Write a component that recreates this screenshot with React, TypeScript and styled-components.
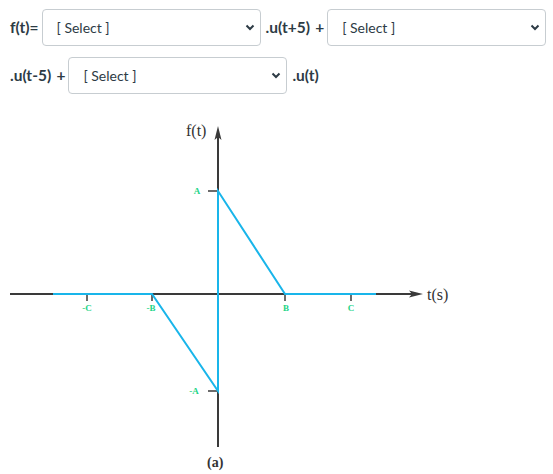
import React from "react";
import styled, { createGlobalStyle } from "styled-components";

const Global = createGlobalStyle`
  html, body { margin: 0; padding: 0; background: #fff; }
  body { font-family: Lato, "Open Sans", sans-serif; color: #2d3b45; }
`;

const Page = styled.div`
  padding: 8px 0 0 10px;
  width: 553px;
  box-sizing: border-box;
`;

const Row = styled.div`
  display: flex;
  align-items: center;
  height: 38px;
  margin-bottom: 10px;
`;

const Label = styled.span`
  font-weight: 700;
  font-size: 15.5px;
  word-spacing: 1.5px;
  color: #2d3b45;
  white-space: nowrap;
`;

const SelectWrap = styled.div`
  position: relative;
  margin: 0 5px 0 3px;
  width: 219px;
  height: 37px;
  flex: none;
`;

const Select = styled.select`
  appearance: none;
  -webkit-appearance: none;
  width: 100%;
  height: 100%;
  box-sizing: border-box;
  border: 1px solid #c7cdd1;
  border-radius: 4px;
  background: #fff;
  padding: 0 30px 0 14px;
  font-family: Lato, sans-serif;
  font-size: 14px;
  color: #2d3b45;
  outline: none;
`;

const Chevron = styled.svg`
  position: absolute;
  right: 6px;
  top: 15px;
  width: 10px;
  height: 7px;
  pointer-events: none;
`;

const Graph = styled.svg`
  display: block;
`;

function Dropdown() {
  return (
    <SelectWrap>
      <Select defaultValue="">
        <option value="">[ Select ]</option>
      </Select>
      <Chevron viewBox="0 0 10 7">
        <path d="M1.5 1.5 L5 5 L8.5 1.5" fill="none" stroke="#2d3b45" strokeWidth="2" />
      </Chevron>
    </SelectWrap>
  );
}

const AXIS = "#3a3a3a";
const BLUE = "#19b5ea";
const GREEN = "#22d486";

export default function App() {
  return (
    <>
      <Global />
      <Page>
        <Row>
          <Label>f(t)=</Label>
          <Dropdown />
          <Label>.u(t+5) +</Label>
          <Dropdown />
        </Row>
        <Row>
          <Label>.u(t-5) +</Label>
          <Dropdown />
          <Label>.u(t)</Label>
        </Row>
      </Page>
      <Graph width="553" height="370" viewBox="0 104 553 370">
        {/* axes */}
        <line x1="10" y1="294" x2="414" y2="294" stroke={AXIS} strokeWidth="2" />
        <path d="M423 294 L409 290.5 L412 294 L409 297.5 Z" fill={AXIS} />
        <line x1="218" y1="447" x2="218" y2="135" stroke={AXIS} strokeWidth="2" />
        <path d="M218 126 L214.5 140 L218 137 L221.5 140 Z" fill={AXIS} />
        {/* ticks */}
        <line x1="87" y1="294" x2="87" y2="301" stroke={AXIS} strokeWidth="1.5" />
        <line x1="152" y1="294" x2="152" y2="301" stroke={AXIS} strokeWidth="1.5" />
        <line x1="285" y1="294" x2="285" y2="301" stroke={AXIS} strokeWidth="1.5" />
        <line x1="351" y1="294" x2="351" y2="301" stroke={AXIS} strokeWidth="1.5" />
        <line x1="208" y1="191" x2="218" y2="191" stroke={AXIS} strokeWidth="1.5" />
        <line x1="208" y1="391" x2="218" y2="391" stroke={AXIS} strokeWidth="1.5" />
        {/* signal */}
        <polyline
          points="53,294 152,294 218,391 218,191 285,294 376,294"
          fill="none"
          stroke={BLUE}
          strokeWidth="2"
          strokeLinejoin="miter"
        />
        {/* labels */}
        <g fontFamily="'Liberation Serif', serif" fontWeight="700" fontSize="9" fill={GREEN} textAnchor="middle">
          <text x="87" y="311">-C</text>
          <text x="151" y="311">-B</text>
          <text x="286" y="311">B</text>
          <text x="351" y="311">C</text>
          <text x="197" y="194">A</text>
          <text x="194" y="394">-A</text>
        </g>
        <g fontFamily="'Liberation Serif', serif" fill="#333">
          <text x="186" y="136" fontSize="16">f(t)</text>
          <text x="427" y="300" fontSize="16">t(s)</text>
          <text x="207" y="467" fontSize="14" fontWeight="700">(a)</text>
        </g>
      </Graph>
    </>
  );
}
